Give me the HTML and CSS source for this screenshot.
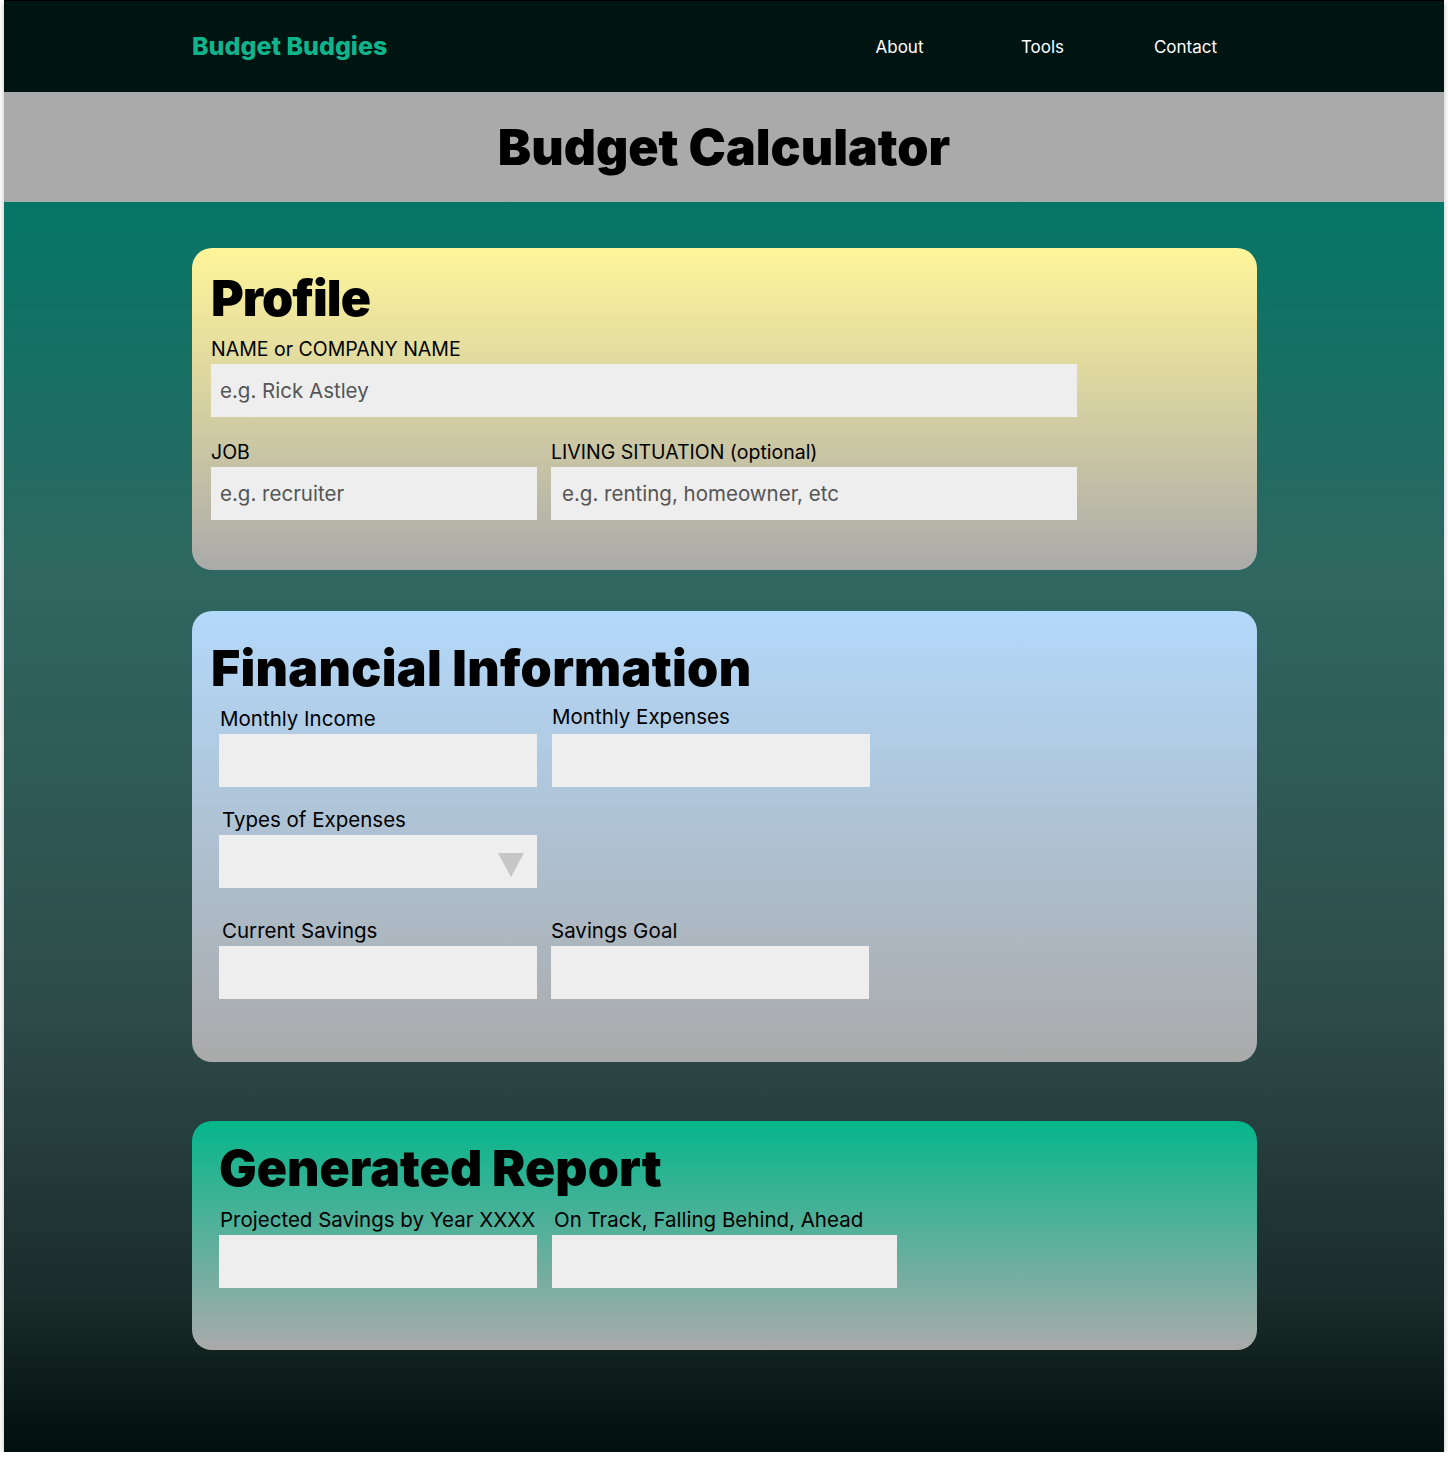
FILE: index.html
```html
<!DOCTYPE html>
<html lang="en">
<head>
<meta charset="utf-8">
<title>Budget Budgies - Budget Calculator</title>
<link rel="stylesheet" href="styles.css">
</head>
<body>
<div class="frame">
  <header class="nav">
    <div class="nav-inner">
      <a class="logo" href="#">Budget Budgies</a>
      <ul class="links">
        <li><a href="#">About</a></li>
        <li><a href="#">Tools</a></li>
        <li><a href="#">Contact</a></li>
      </ul>
    </div>
  </header>
  <section class="banner">
    <h1 class="title">Budget Calculator</h1>
  </section>
  <main class="main">
    <section class="card card-profile">
      <h2 class="card-title">Profile</h2>
      <div class="field field-full">
        <label class="label">NAME or COMPANY NAME</label>
        <input class="input" type="text" placeholder="e.g. Rick Astley">
      </div>
      <div class="row row-profile">
        <div class="field field-job">
          <label class="label">JOB</label>
          <input class="input" type="text" placeholder="e.g. recruiter">
        </div>
        <div class="field field-living">
          <label class="label">LIVING SITUATION (optional)</label>
          <input class="input input-living" type="text" placeholder="e.g. renting, homeowner, etc">
        </div>
      </div>
    </section>

    <section class="card card-finance">
      <h2 class="card-title">Financial Information</h2>
      <div class="row row-fin row-first">
        <div class="field field-half">
          <label class="label label-indent">Monthly Income</label>
          <input class="input" type="text">
        </div>
        <div class="field field-half field-right">
          <label class="label label-up">Monthly Expenses</label>
          <input class="input" type="text">
        </div>
      </div>
      <div class="row row-fin row-types">
        <div class="field field-half">
          <label class="label label-indent2">Types of Expenses</label>
          <div class="select">
            <svg class="arrow" width="26" height="24" viewBox="0 0 26 24"><polygon points="0,0 26,0 13,24" fill="#c6c6c6"/></svg>
          </div>
        </div>
      </div>
      <div class="row row-fin row-savings">
        <div class="field field-half">
          <label class="label label-indent2">Current Savings</label>
          <input class="input" type="text">
        </div>
        <div class="field field-half field-right2">
          <label class="label">Savings Goal</label>
          <input class="input" type="text">
        </div>
      </div>
    </section>

    <section class="card card-report">
      <h2 class="card-title">Generated Report</h2>
      <div class="row row-report">
        <div class="field field-half">
          <label class="label label-indent">Projected Savings by Year XXXX</label>
          <input class="input" type="text">
        </div>
        <div class="field field-track">
          <label class="label label-indent0">On Track, Falling Behind, Ahead</label>
          <input class="input" type="text">
        </div>
      </div>
    </section>
  </main>
</div>
</body>
</html>
```

FILE: styles.css
```css
* { box-sizing: border-box; }

html, body {
  margin: 0;
  padding: 0;
  background: #ffffff;
}

body {
  font-family: Inter, "Noto Sans", "DejaVu Sans", sans-serif;
  color: #000;
}

.frame {
  width: 1440px;
  margin: 0 0 0 4px;
  box-shadow: 0 2px 6px rgba(0, 0, 0, 0.25);
}

/* NAV */
.nav {
  height: 92px;
  background: #001412;
  border-top: 1px solid #000;
}

.nav-inner {
  width: 1065px;
  margin: 0 0 0 188px;
  height: 100%;
  display: flex;
  align-items: center;
  justify-content: space-between;
}

.logo {
  font-weight: 800;
  font-size: 25px;
  color: #10b48c;
  text-decoration: none;
  letter-spacing: 0;
  margin-top: -2px;
  margin-left: 0;
}

.links {
  list-style: none;
  margin: 0;
  padding: 0;
  display: flex;
}

.links li {
  width: 143px;
  text-align: center;
}

.links a {
  color: #ffffff;
  text-decoration: none;
  font-size: 17px;
}

/* BANNER */
.banner {
  height: 110px;
  background: #aaaaaa;
  display: flex;
  align-items: center;
  justify-content: center;
}

.title {
  margin: 0;
  font-size: 50px;
  font-weight: 900;
  letter-spacing: 0;
  line-height: 1;
}

/* MAIN */
.main {
  height: 1250px;
  padding: 46px 0 0 188px;
  background: linear-gradient(180deg, #047667 0%, #2f6760 30%, #2e4b49 65%, #1a2b2a 88%, #010f0e 100%);
}

.card {
  width: 1065px;
  border-radius: 20px;
}

.card-title {
  margin: 0;
  font-size: 50px;
  font-weight: 900;
  line-height: 60px;
  letter-spacing: 0;
}

.card-profile .card-title { letter-spacing: -1px; }
.card-finance .card-title { letter-spacing: 0.3px; }

.card-profile {
  height: 322px;
  padding: 20px 0 0 19px;
  background: linear-gradient(180deg, #fff59a 0%, #aaaaaa 100%);
}

.card-finance {
  margin-top: 41px;
  height: 451px;
  padding: 27px 0 0 19px;
  background: linear-gradient(180deg, #b3d9fb 0%, #aaaaaa 100%);
}

.card-report {
  margin-top: 59px;
  height: 229px;
  padding: 17px 0 0 27px;
  background: linear-gradient(180deg, #05b68b 0%, #aaaaaa 100%);
}

.card-profile .card-title { margin-bottom: 9px; }
.card-finance .card-title { margin-bottom: 9px; }
.card-report .card-title { margin-bottom: 10px; }

.field {
  display: flex;
  flex-direction: column;
}

.label {
  font-size: 20.5px;
  line-height: 24px;
  margin-bottom: 3px;
  white-space: nowrap;
}

.card-profile .label { font-size: 19.5px; }

.input {
  display: block;
  width: 100%;
  height: 53px;
  border: none;
  outline: none;
  background: #eeeeee;
  padding: 0 9px;
  font-family: Inter, "Noto Sans", sans-serif;
  font-size: 20.5px;
  color: #333;
}

.input::placeholder { color: #555555; }

.input-living { padding-left: 11px; }

.field-full { width: 866px; }

.row { display: flex; }

.row-profile {
  margin-top: 23px;
  gap: 14px;
}

.field-job { width: 326px; }
.field-living { width: 526px; }

/* Finance */
.row-fin { padding-left: 8px; }
.row-first { gap: 15px; }
.field-half { width: 318px; }
.row-types { margin-top: 21px; }
.row-savings { margin-top: 31px; gap: 14px; }

.label-indent { padding-left: 1px; }
.label-indent2 { padding-left: 3px; }
.label-up { margin-top: -2px; margin-bottom: 5px; }

.select {
  height: 53px;
  background: #eeeeee;
  display: flex;
  justify-content: flex-end;
  align-items: center;
  padding-right: 13px;
}

.arrow { display: block; margin-top: 6px; }

/* Report */
.card-report .row-report {
  margin-left: -8px;
  padding-left: 8px;
  gap: 15px;
}

.card-report .field-half { width: 318px; }
.field-track { width: 345px; }
.label-indent0 { padding-left: 2px; }
```
